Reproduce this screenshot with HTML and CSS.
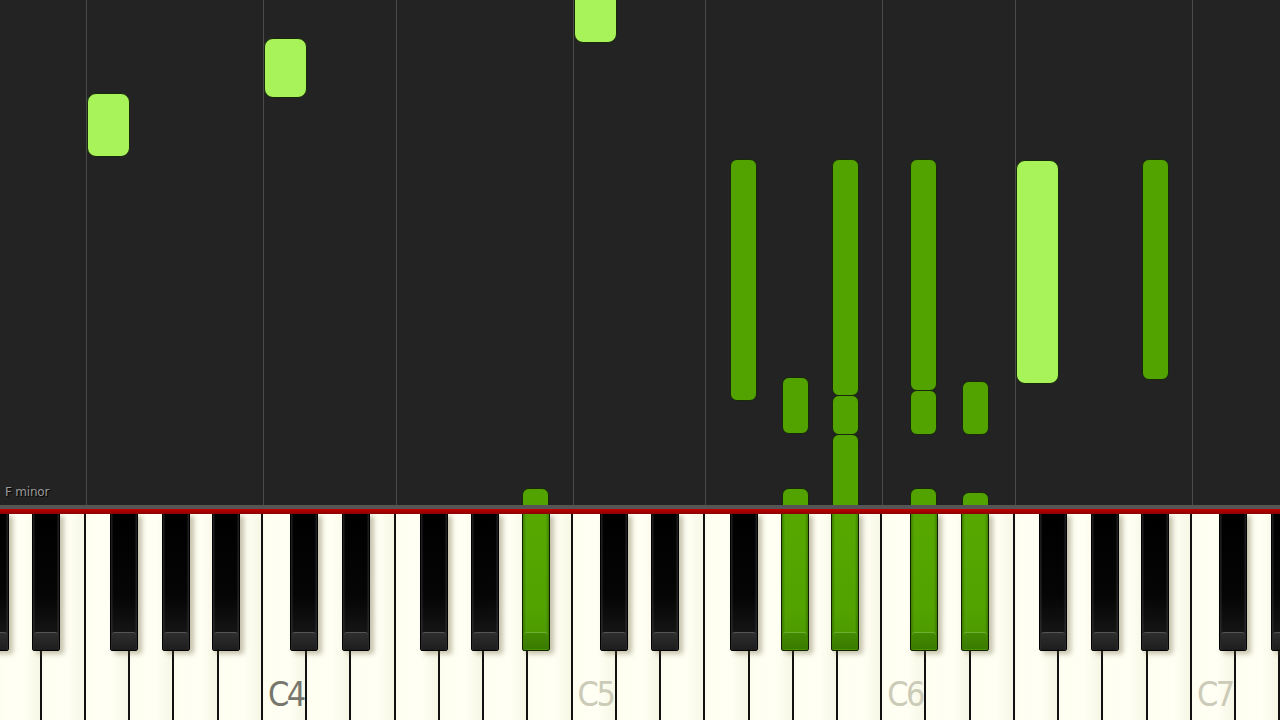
FILE: index.html
```html
<!DOCTYPE html>
<html lang="en">
<head>
  <meta charset="UTF-8" />
  <title>Piano Roll</title>
  <link rel="stylesheet" href="styles.css">
</head>
<body>

  <div class="stage">
    <!-- Falling notes -->
    <div class="roll" id="roll">
      <div class="key-sig">F minor</div>
    </div>

    <!-- Grey + red rail above the keys -->
    <div class="rail"></div>

    <!-- Keyboard -->
    <div class="keyboard" id="keyboard">
      <div class="whites" id="whites"></div>
    </div>
  </div>

  <script>
    const OCT = 309.7;
    const W = OCT / 7;
    const X0 = -46.7;
    const FIRST_OCT = 3;

    const whiteNames = ["C", "D", "E", "F", "G", "A", "B"];
    const blackKeys = [
      { name: "C#", off: 27.3 },
      { name: "D#", off: 78.6 },
      { name: "F#", off: 157 },
      { name: "G#", off: 208.4 },
      { name: "A#", off: 258.7 }
    ];
    const pressed = ["A#4", "G#5", "A#5", "C#6", "D#6"];
    const labels = { C4: "dark", C5: "light", C6: "light", C7: "light" };

    const roll = document.getElementById("roll");
    const keyboard = document.getElementById("keyboard");
    const whites = document.getElementById("whites");

    function keyX(name) {
      const oct = parseInt(name.slice(-1)) - FIRST_OCT;
      const n = name.slice(0, -1);
      const base = X0 + oct * OCT;
      if (n.length === 1) return base + whiteNames.indexOf(n) * W;
      return base + blackKeys.find(b => b.name === n).off;
    }

    // white keys
    for (let o = 0; o < 5; o++) {
      whiteNames.forEach(n => {
        const key = document.createElement("div");
        key.className = "white";
        const full = n + (FIRST_OCT + o);
        if (labels[full]) {
          const lab = document.createElement("span");
          lab.className = "label " + labels[full];
          lab.textContent = full;
          key.appendChild(lab);
        }
        whites.appendChild(key);
      });
    }

    // black keys
    for (let o = 0; o < 5; o++) {
      blackKeys.forEach(b => {
        const full = b.name + (FIRST_OCT + o);
        const key = document.createElement("div");
        key.className = "black" + (pressed.includes(full) ? " pressed" : "");
        key.style.left = keyX(full) + "px";
        keyboard.appendChild(key);
      });
    }

    // grid lines at every C and F
    for (let o = 0; o < 5; o++) {
      [0, 3].forEach(i => {
        const line = document.createElement("div");
        line.className = "grid-line";
        line.style.left = Math.round(X0 + o * OCT + i * W) + "px";
        roll.appendChild(line);
      });
    }

    // notes: [key, top, bottom]
    const notes = [
      ["F3", 93, 157],
      ["C4", 38, 98],
      ["C5", -12, 43],
      ["A#4", 488, 520],
      ["F#5", 159, 401],
      ["G#5", 377, 434],
      ["G#5", 488, 520],
      ["A#5", 159, 396],
      ["A#5", 395, 435],
      ["A#5", 434, 520],
      ["C#6", 159, 391],
      ["C#6", 390, 435],
      ["C#6", 488, 520],
      ["D#6", 381, 435],
      ["D#6", 492, 520],
      ["F6", 160, 384],
      ["A#6", 159, 380]
    ];

    notes.forEach(([k, top, bottom]) => {
      const note = document.createElement("div");
      const isBlack = k.includes("#");
      note.className = "note " + (isBlack ? "note-black" : "note-white");
      note.style.left = (keyX(k) + (isBlack ? 0.5 : 1)) + "px";
      note.style.top = top + "px";
      note.style.height = (bottom - top) + "px";
      roll.appendChild(note);
    });
  </script>

</body>
</html>
```

FILE: styles.css
```css
* {
  box-sizing: border-box;
}

body {
  margin: 0;
  padding: 0;
  background: #232323;
  width: 1280px;
  height: 720px;
  overflow: hidden;
  font-family: "DejaVu Sans", sans-serif;
}

.stage {
  display: flex;
  flex-direction: column;
  width: 1280px;
  height: 720px;
}

/* Note roll */
.roll {
  position: relative;
  height: 505px;
  overflow: hidden;
  background: #232323;
}

.grid-line {
  position: absolute;
  top: 0;
  bottom: 0;
  width: 1px;
  background: #4a4a4a;
}

.key-sig {
  position: absolute;
  left: 5px;
  top: 485px;
  font-size: 12px;
  color: #9a9a9a;
  text-shadow: 1px 1px 1px #000;
  letter-spacing: -0.2px;
}

.note {
  position: absolute;
  border: 1px solid #17290a;
  z-index: 1;
}

.note-white {
  width: 43px;
  background: #a8f25a;
  border-radius: 9px;
}

.note-black {
  width: 27px;
  background: #52a300;
  border-radius: 7px;
}

/* Rail */
.rail {
  height: 9px;
  border-top: 4px solid #555;
  background: linear-gradient(#c00000, #8a0000);
}

/* Keyboard */
.keyboard {
  position: relative;
  flex: 1;
  overflow: hidden;
  background: #fefef0;
}

.whites {
  display: flex;
  height: 100%;
  margin-left: -46.7px;
}

.white {
  flex: 0 0 calc(309.7px / 7);
  height: 100%;
  border-right: 2px solid #111;
  background: linear-gradient(90deg, #fefef0 0%, #fffff4 60%, #f7f7e6 100%);
  display: flex;
  align-items: flex-end;
}

.label {
  font-family: "DejaVu Sans Condensed", "DejaVu Sans", sans-serif;
  font-size: 34px;
  line-height: 1;
  letter-spacing: -2.5px;
  padding: 0 0 9px 5px;
}

.label.dark {
  color: #76766c;
}

.label.light {
  color: #cbcbb8;
}

.black {
  position: absolute;
  top: -1px;
  width: 28px;
  height: 138px;
  border: 1px solid #000;
  border-radius: 0 0 2px 2px;
  background:
    linear-gradient(90deg, rgba(60, 60, 60, 0.6) 0%, transparent 10%, transparent 90%, rgba(60, 60, 60, 0.6) 100%),
    linear-gradient(#000 0%, #050505 60%, #1c1c1c 100%);
  box-shadow: 4px 3px 5px rgba(90, 80, 40, 0.35);
}

.black::after {
  content: "";
  position: absolute;
  left: 1px;
  right: 1px;
  bottom: 1px;
  height: 16px;
  border-top: 1px solid #555;
  border-radius: 3px 3px 1px 1px;
  background: linear-gradient(#2e2e2e, #1e1e1e);
}

.black.pressed {
  border-color: #102000;
  background:
    linear-gradient(90deg, rgba(40, 90, 0, 0.5) 0%, transparent 12%, transparent 88%, rgba(40, 90, 0, 0.5) 100%),
    linear-gradient(#56a800 0%, #52a200 70%, #4a9600 100%);
}

.black.pressed::after {
  border-top-color: #6cb030;
  background: linear-gradient(#448a00, #3a7a00);
}
```
